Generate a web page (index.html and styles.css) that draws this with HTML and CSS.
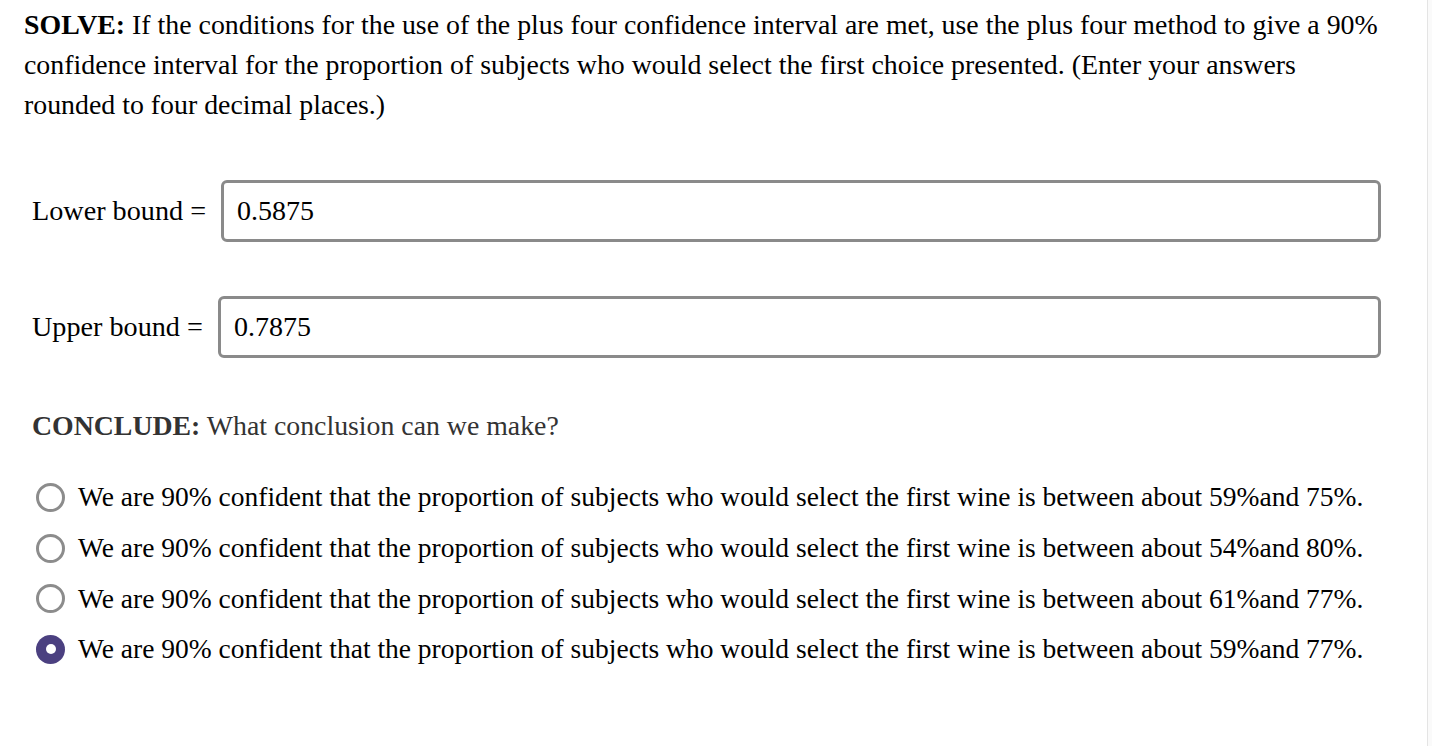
FILE: index.html
```html
<!DOCTYPE html>
<html>
<head>
<meta charset="utf-8">
<link rel="stylesheet" href="styles.css">
</head>
<body>
<div class="layout">
  <main class="content">
    <p class="solve"><b>SOLVE:</b> If the conditions for the use of the plus four confidence interval are met, use the plus four method to give a 90% confidence interval for the proportion of subjects who would select the first choice presented. (Enter your answers rounded to four decimal places.)</p>

    <div class="field field-lower">
      <span class="label">Lower bound =</span>
      <div class="input">0.5875</div>
    </div>

    <div class="field field-upper">
      <span class="label">Upper bound =</span>
      <div class="input">0.7875</div>
    </div>

    <p class="conclude"><b>CONCLUDE:</b> What conclusion can we make?</p>

    <ul class="options">
      <li class="option"><span class="radio"></span><span class="otext">We are 90% confident that the proportion of subjects who would select the first wine is between about <span class="m">59%</span>and <span class="m">75%</span>.</span></li>
      <li class="option"><span class="radio"></span><span class="otext">We are 90% confident that the proportion of subjects who would select the first wine is between about <span class="m">54%</span>and <span class="m">80%</span>.</span></li>
      <li class="option"><span class="radio"></span><span class="otext">We are 90% confident that the proportion of subjects who would select the first wine is between about <span class="m">61%</span>and <span class="m">77%</span>.</span></li>
      <li class="option"><span class="radio checked"></span><span class="otext">We are 90% confident that the proportion of subjects who would select the first wine is between about <span class="m">59%</span>and <span class="m">77%</span>.</span></li>
    </ul>
  </main>
  <div class="track"></div>
</div>
</body>
</html>
```

FILE: styles.css
```css
html, body {
  margin: 0;
  padding: 0;
  background: #ffffff;
}

body {
  font-family: "Liberation Serif", "Times New Roman", serif;
  color: #000;
  width: 1432px;
  height: 746px;
  overflow: hidden;
}

.layout {
  display: flex;
  height: 746px;
}

.content {
  flex: 1;
  padding: 0 0 0 24px;
}

.track {
  width: 4px;
  background: #fafafa;
  border-left: 1px solid #e4e4e4;
}

.solve {
  margin: 5px 0 0 0;
  font-size: 27.85px;
  line-height: 40px;
  width: 1362px;
}

.field {
  display: flex;
  align-items: center;
  margin-left: 8px;
}

.field-lower {
  margin-top: 55px;
}

.field-upper {
  margin-top: 54px;
}

.label {
  font-size: 28.2px;
  padding-right: 15px;
}

.input {
  box-sizing: border-box;
  height: 62px;
  border: 3px solid #8a8a8a;
  border-radius: 6px;
  font-size: 28px;
  display: flex;
  align-items: center;
  padding-left: 13px;
}

.field-lower .input {
  width: 1160px;
}

.field-upper .input {
  width: 1163px;
}

.conclude {
  margin: 52px 0 0 8px;
  font-size: 27.8px;
  line-height: 32px;
  color: #333333;
}

.options {
  list-style: none;
  margin: 30px 0 0 12px;
  padding: 0;
}

.option {
  display: flex;
  align-items: center;
  height: 50.7px;
  font-size: 27.5px;
}

.radio {
  box-sizing: border-box;
  width: 29px;
  height: 29px;
  border: 3px solid #8c8c8c;
  border-radius: 50%;
  margin-right: 13px;
  flex: none;
  display: flex;
  align-items: center;
  justify-content: center;
}

.radio.checked {
  border: none;
  background: #4b4080;
}

.radio.checked::after {
  content: "";
  width: 10px;
  height: 10px;
  border-radius: 50%;
  background: #ffffff;
}

.otext {
  white-space: nowrap;
}
```
